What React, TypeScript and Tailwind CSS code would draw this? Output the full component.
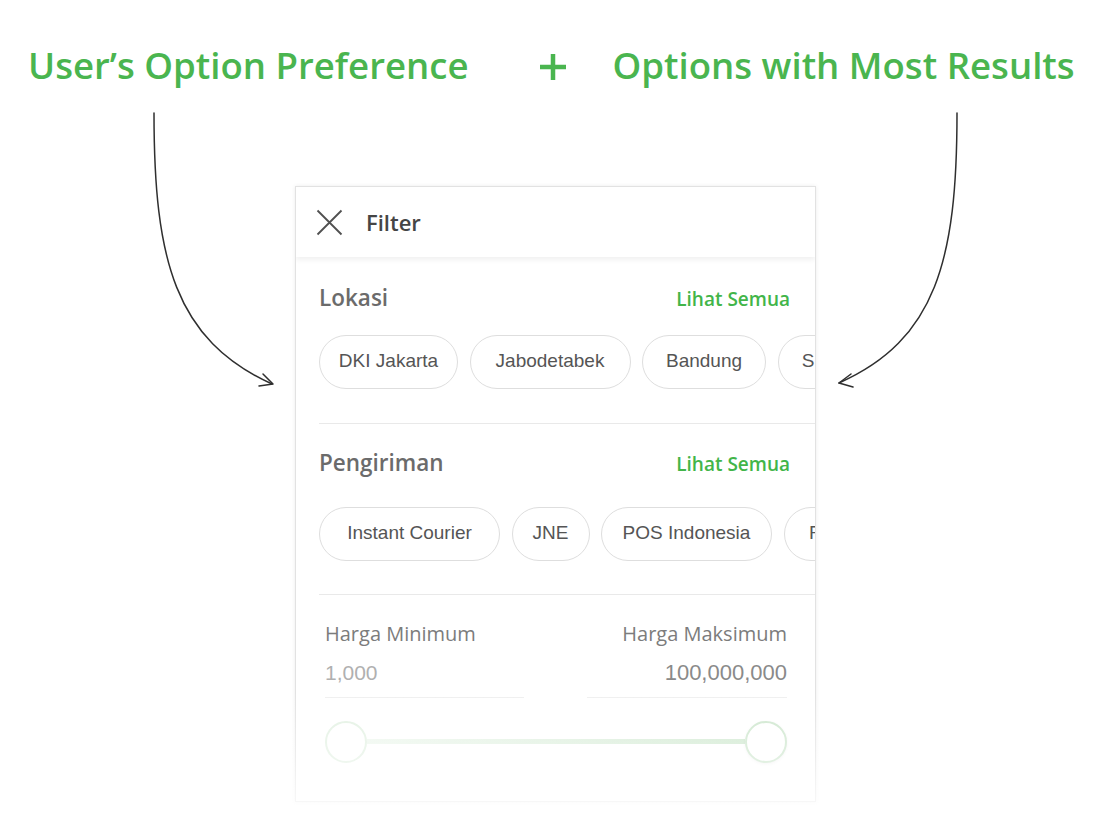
import React from "react";

const OPEN = { fontFamily: '"Open Sans", "Noto Sans", sans-serif' };
const HELV = { fontFamily: '"Liberation Sans", Arial, sans-serif' };

type ChipSpec = { label: string; w: number };

const lokasi: ChipSpec[] = [
  { label: "DKI Jakarta", w: 139 },
  { label: "Jabodetabek", w: 161 },
  { label: "Bandung", w: 124 },
  { label: "Surabaya", w: 130 },
];

const pengiriman: ChipSpec[] = [
  { label: "Instant Courier", w: 181 },
  { label: "JNE", w: 78 },
  { label: "POS Indonesia", w: 171 },
  { label: "RPX", w: 90 },
];

function Chip({ label, w }: ChipSpec) {
  return (
    <div
      className="h-[54px] shrink-0 rounded-full border border-[#dedede] bg-white flex items-center justify-center text-[19px] text-[#555] whitespace-nowrap"
      style={{ ...HELV, width: w }}
    >
      {label}
    </div>
  );
}

function SectionHead({ title }: { title: string }) {
  return (
    <div className="flex items-baseline justify-between pr-[25px] leading-[28px]" style={OPEN}>
      <span className="text-[22.5px] font-semibold text-[#6b6b6b]">{title}</span>
      <span className="text-[19px] font-semibold text-[#42b549]">Lihat Semua</span>
    </div>
  );
}

function Arrows() {
  return (
    <svg
      className="absolute inset-0 pointer-events-none"
      width="1104"
      height="825"
      viewBox="0 0 1104 825"
      fill="none"
      stroke="#2f2f2f"
      strokeWidth="1.5"
      strokeLinecap="round"
      strokeLinejoin="round"
    >
      <path d="M154 113 C154 260 175 340 272 384" />
      <path d="M263 374 L273 384 L259 386" />
      <path d="M957 113 C957 260 936 340 839 383" />
      <path d="M851 374 L839 383 L853 387" />
    </svg>
  );
}

export default function App() {
  return (
    <div className="relative w-[1104px] h-[825px] overflow-hidden bg-white">
      {/* headline */}
      <div
        className="flex items-center pt-[47px] pl-[28px] text-[36.6px] leading-none font-semibold text-[#4ab54f]"
        style={OPEN}
      >
        <span className="whitespace-nowrap">User’s Option Preference</span>
        <svg className="ml-[70px] mt-[3px]" width="28" height="28" viewBox="0 0 28 28">
          <path d="M14 1 V27 M1 14 H27" stroke="#4ab54f" strokeWidth="4.5" />
        </svg>
        <span className="ml-[46px] whitespace-nowrap">Options with Most Results</span>
      </div>

      {/* filter sheet */}
      <div className="relative ml-[295px] mt-[102px] w-[521px] h-[616px] overflow-hidden border border-[#e2e2e2] bg-white shadow-[0_0_4px_rgba(0,0,0,0.08)]">
        <div className="h-[70px] flex items-center pl-[20px] shadow-[0_3px_5px_rgba(0,0,0,0.06)] relative z-10">
          <svg width="27" height="27" viewBox="0 0 27 27" className="mt-[2px]">
            <path d="M1.5 1.5 L25.5 25.5 M25.5 1.5 L1.5 25.5" stroke="#505050" strokeWidth="1.8" />
          </svg>
          <span className="ml-[23px] text-[22px] font-semibold text-[#454545] leading-none" style={OPEN}>
            Filter
          </span>
        </div>

        <div className="pl-[23px]">
          <div className="pt-[27px]">
            <SectionHead title="Lokasi" />
          </div>
          <div className="mt-[22px] flex gap-[11.5px]">
            {lokasi.map((c) => (
              <Chip key={c.label} {...c} />
            ))}
          </div>
          <div className="mt-[34px] h-px bg-[#e9e9e9]" />

          <div className="mt-[25px]">
            <SectionHead title="Pengiriman" />
          </div>
          <div className="mt-[29px] flex gap-[11.5px]">
            {pengiriman.map((c) => (
              <Chip key={c.label} {...c} />
            ))}
          </div>
          <div className="mt-[33px] h-px bg-[#e9e9e9]" />
        </div>

        {/* price range */}
        <div className="pl-[29px] pr-[28px]">
          <div className="mt-[27px] flex justify-between">
            <div className="w-[199px]">
              <div className="text-[20px] leading-[24px] text-[#7c7c7c] whitespace-nowrap" style={OPEN}>
                Harga Minimum
              </div>
              <div className="mt-[15px] text-[21px] leading-[24px] text-[#b0b0b0]" style={HELV}>
                1,000
              </div>
              <div className="mt-[12px] h-px bg-[#efefef]" />
            </div>
            <div className="w-[200px] text-right">
              <div className="text-[20px] leading-[24px] text-[#7c7c7c] whitespace-nowrap" style={OPEN}>
                Harga Maksimum
              </div>
              <div className="mt-[15px] text-[22px] leading-[24px] text-[#8a8a8a]" style={HELV}>
                100,000,000
              </div>
              <div className="mt-[12px] h-px bg-[#efefef]" />
            </div>
          </div>

          <div className="mt-[23px] flex items-center">
            <div className="w-[42px] h-[42px] shrink-0 rounded-full border-2 border-[#e3f1e3] bg-white" />
            <div className="flex-1 h-[5px] bg-gradient-to-r from-[#eef7ee] to-[#cfe8cf]" />
            <div className="w-[42px] h-[42px] shrink-0 rounded-full border-2 border-[#cde6cd] bg-white shadow-[0_1px_3px_rgba(0,0,0,0.06)]" />
          </div>
        </div>
      </div>

      {/* soft fade over the lower part of the sheet */}
      <div className="absolute left-0 right-0 top-[690px] h-[135px] bg-gradient-to-b from-white/0 via-white/40 to-white/90 pointer-events-none" />

      <Arrows />
    </div>
  );
}
